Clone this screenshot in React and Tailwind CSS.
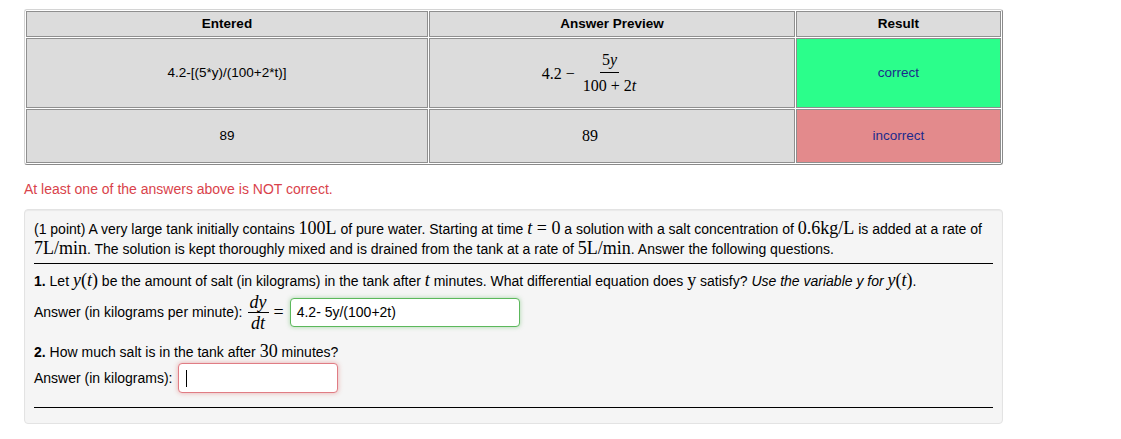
import React from "react";

const sans = "font-['Liberation_Sans',Arial,sans-serif]";
const serif = "font-['Liberation_Serif','Times_New_Roman',serif]";

function M({ children, className = "" }) {
  return <span className={`${serif} text-[18px] ${className}`}>{children}</span>;
}

function I({ children }) {
  return <i className={`${serif} italic`}>{children}</i>;
}

function Frac({ top, bottom, size = "text-[16px]", gapTop = "pb-[3px]", gapBottom = "pt-[4px]" }) {
  return (
    <span className={`${serif} ${size} inline-flex flex-col items-center leading-[18px]`}>
      <span className={`px-[2px] ${gapTop} border-b border-black`}>{top}</span>
      <span className={`px-[2px] ${gapBottom}`}>{bottom}</span>
    </span>
  );
}

function Cell({ children, className = "", head, color = "text-black" }) {
  const base = head ? "font-bold" : "";
  return (
    <td className={`border border-[#8f8f8f] text-center align-middle p-0 text-[13.5px] ${color} ${base} ${className}`}>
      {children}
    </td>
  );
}

export default function App() {
  return (
    <div className={`${sans} min-h-screen bg-white pl-[24px] pt-[9px] text-[#222]`}>
      <table className="table-fixed border-separate border-spacing-[1px] border border-t-[#d4d4d4] border-l-[#d4d4d4] border-b-[#8a8a8a] border-r-[#8a8a8a] rounded-[3px] bg-white">
        <tbody>
          <tr className="h-[26px] bg-[#dcdcdc]">
            <Cell head className="w-[402px]">Entered</Cell>
            <Cell head className="w-[366px]">Answer Preview</Cell>
            <Cell head className="w-[205px]">Result</Cell>
          </tr>
          <tr className="h-[70px]">
            <Cell className="bg-[#dcdcdc]">4.2-[(5*y)/(100+2*t)]</Cell>
            <Cell className="bg-[#dcdcdc]">
              <div className={`${serif} text-[16px] flex items-center justify-center gap-[6px] pr-[44px]`}>
                <span className="pt-[2px]">4.2 −</span>
                <Frac top={<>5<I>y</I></>} bottom={<>100 + 2<I>t</I></>} />
              </div>
            </Cell>
            <Cell className="bg-[#2bfe8b]" color="text-[#1c2a8c]">correct</Cell>
          </tr>
          <tr className="h-[54px]">
            <Cell className="bg-[#dcdcdc]">89</Cell>
            <Cell className="bg-[#dcdcdc]">
              <div className={`${serif} text-[16px] pr-[44px]`}>89</div>
            </Cell>
            <Cell className="bg-[#e38a8c]" color="text-[#1c2a8c]">incorrect</Cell>
          </tr>
        </tbody>
      </table>

      <p className="mt-[14px] text-[14px] leading-[20px] text-[#d9434b]">At least one of the answers above is NOT correct.</p>

      <div className="mt-[10px] w-[979px] rounded-[4px] border border-[#e3e3e3] bg-[#f5f5f5] shadow-[inset_0_1px_1px_rgba(0,0,0,0.05)] px-[9px] pt-[9px] pb-[15px] text-[14px] text-black">
        <p className="leading-[19px]">
          (1 point) A very large tank initially contains <M>100L</M> of pure water. Starting at time{" "}
          <M>
            <I>t</I> = 0
          </M>{" "}
          a solution with a salt concentration of <M>0.6kg/L</M> is added at a rate of <M>7L/min</M>. The solution is
          kept thoroughly mixed and is drained from the tank at a rate of <M>5L/min</M>. Answer the following questions.
        </p>
        <hr className="mt-[4px] mb-[7px] border-t border-black" />
        <p className="leading-[19px]">
          <b>1.</b> Let{" "}
          <M>
            <I>y</I>(<I>t</I>)
          </M>{" "}
          be the amount of salt (in kilograms) in the tank after{" "}
          <M>
            <I>t</I>
          </M>{" "}
          minutes. What differential equation does <M>y</M> satisfy?{" "}
          <i>Use the variable y for</i>{" "}
          <M>
            <I>y</I>(<I>t</I>)
          </M>
          .
        </p>
        <div className="mt-[4px] flex items-center h-[34px]">
          <span>Answer (in kilograms per minute):</span>
          <span className="ml-[5px] flex">
            <Frac size="text-[18px]" gapTop="pb-[1px]" gapBottom="pt-[1px]" top={<I>dy</I>} bottom={<I>dt</I>} />
          </span>
          <M className="ml-[5px] mr-[6px]">=</M>
          <div className="w-[230px] h-[29px] rounded-[4px] border border-[#5cb85c] bg-white shadow-[0_0_4px_rgba(92,184,92,0.5)] flex items-center px-[6px] text-[14px]">
            4.2- 5y/(100+2t)
          </div>
        </div>
        <p className="mt-[13px] leading-[19px]">
          <b>2.</b> How much salt is in the tank after <M>30</M> minutes?
        </p>
        <div className="mt-[1px] flex items-center h-[30px]">
          <span>Answer (in kilograms):</span>
          <div className="ml-[6px] w-[160px] h-[30px] rounded-[4px] border border-[#e07c84] bg-white shadow-[0_0_5px_rgba(217,83,79,0.45)] flex items-center px-[7px]">
            <span className="w-px h-[17px] bg-black" />
          </div>
        </div>
        <hr className="mt-[14px] border-t border-black" />
      </div>
    </div>
  );
}
